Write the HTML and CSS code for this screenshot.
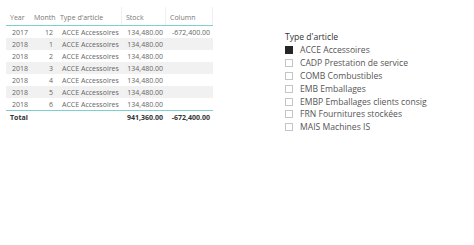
FILE: index.html
```html
<!DOCTYPE html>
<html lang="en">
<head>
    <meta charset="UTF-8">
    <title>Report</title>
    <link rel="stylesheet" href="styles.css">
</head>
<body>
    <div class="canvas">
        <!-- Table visual -->
        <div class="table">
            <div class="row head">
                <div class="cell">Year</div>
                <div class="cell">Month</div>
                <div class="cell sep">Type d'article</div>
                <div class="cell sep">Stock</div>
                <div class="cell sep">Column</div>
            </div>
            <div class="row">
                <div class="cell year">2017</div>
                <div class="cell num">12</div>
                <div class="cell type">ACCE Accessoires</div>
                <div class="cell num">134,480.00</div>
                <div class="cell num">-672,400.00</div>
            </div>
            <div class="row alt">
                <div class="cell year">2018</div>
                <div class="cell num">1</div>
                <div class="cell type">ACCE Accessoires</div>
                <div class="cell num">134,480.00</div>
                <div class="cell num"></div>
            </div>
            <div class="row">
                <div class="cell year">2018</div>
                <div class="cell num">2</div>
                <div class="cell type">ACCE Accessoires</div>
                <div class="cell num">134,480.00</div>
                <div class="cell num"></div>
            </div>
            <div class="row alt">
                <div class="cell year">2018</div>
                <div class="cell num">3</div>
                <div class="cell type">ACCE Accessoires</div>
                <div class="cell num">134,480.00</div>
                <div class="cell num"></div>
            </div>
            <div class="row">
                <div class="cell year">2018</div>
                <div class="cell num">4</div>
                <div class="cell type">ACCE Accessoires</div>
                <div class="cell num">134,480.00</div>
                <div class="cell num"></div>
            </div>
            <div class="row alt">
                <div class="cell year">2018</div>
                <div class="cell num">5</div>
                <div class="cell type">ACCE Accessoires</div>
                <div class="cell num">134,480.00</div>
                <div class="cell num"></div>
            </div>
            <div class="row">
                <div class="cell year">2018</div>
                <div class="cell num">6</div>
                <div class="cell type">ACCE Accessoires</div>
                <div class="cell num">134,480.00</div>
                <div class="cell num"></div>
            </div>
            <div class="row total">
                <div class="cell">Total</div>
                <div class="cell"></div>
                <div class="cell"></div>
                <div class="cell num">941,360.00</div>
                <div class="cell num">-672,400.00</div>
            </div>
        </div>

        <!-- Slicer visual -->
        <div class="slicer">
            <div class="slicer-title">Type d'article</div>
            <div class="item"><span class="box checked"></span>ACCE Accessoires</div>
            <div class="item"><span class="box"></span>CADP Prestation de service</div>
            <div class="item"><span class="box"></span>COMB Combustibles</div>
            <div class="item"><span class="box"></span>EMB Emballages</div>
            <div class="item"><span class="box"></span>EMBP Emballages clients consig</div>
            <div class="item"><span class="box"></span>FRN Fournitures stockées</div>
            <div class="item"><span class="box"></span>MAIS Machines IS</div>
        </div>
    </div>
</body>
</html>
```

FILE: styles.css
```css
/* Report canvas */
body {
    margin: 0;
    background: #fff;
    font-family: 'Open Sans', sans-serif;
}

.canvas {
    display: flex;
    align-items: flex-start;
    width: 474px;
    height: 245px;
}

/* Table visual */
.table {
    margin: 7px 0 0 6px;
    width: 207px;
    font-size: 7px;
    color: #666;
}

.row {
    display: grid;
    grid-template-columns: 24px 26px 66px 44px 47px;
    height: 12px;
    align-items: center;
}

.row.alt {
    background-color: #f1f1f1;
}

.row.head {
    height: 18px;
    align-items: stretch;
    border-bottom: 1px solid #7fd0cd;
    color: #777;
}

.row.head .cell {
    display: flex;
    align-items: center;
    padding-top: 2px;
    padding-left: 4px;
}

.row.head .sep {
    border-right: 1px solid #f0f0f0;
}

.row.total {
    height: 13px;
    border-top: 1px solid #7fd0cd;
    font-weight: bold;
    color: #333;
}

.cell {
    white-space: nowrap;
    overflow: hidden;
    padding-left: 4px;
}

.cell.year {
    padding-left: 6px;
}

.cell.num {
    text-align: right;
    padding-right: 3px;
}

.cell.type {
    padding-left: 6px;
}

/* Slicer visual */
.slicer {
    margin: 30px 0 0 72px;
    color: #555;
}

.slicer-title {
    font-size: 8.6px;
    color: #333;
    height: 14px;
    line-height: 14px;
}

.item {
    display: flex;
    align-items: center;
    height: 12.8px;
    font-size: 8.6px;
    white-space: nowrap;
}

.box {
    width: 6px;
    height: 6px;
    border: 1px solid #c4c4c4;
    margin-right: 7px;
    flex: none;
}

.box.checked {
    background-color: #252525;
    border-color: #252525;
}
```
